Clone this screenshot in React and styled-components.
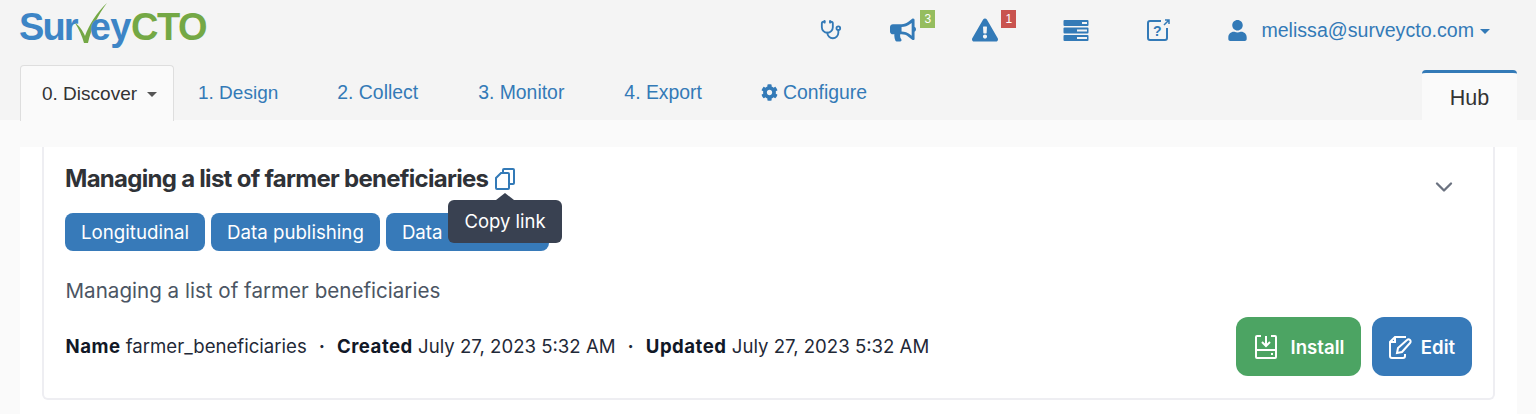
import React from 'react';
import styled, { createGlobalStyle } from 'styled-components';
import { FaBullhorn, FaExclamationTriangle, FaUser, FaCog } from 'react-icons/fa';
import { Stethoscope, ChevronDown } from 'lucide-react';

const GlobalStyle = createGlobalStyle`
  html, body {
    margin: 0;
    height: 414px;
    overflow: hidden;
    background: #fafafa;
  }
`;

const Header = styled.header`
  background: #f4f4f4;
  height: 120px;
  font-family: "Liberation Sans", Arial, sans-serif;
`;

const TopBar = styled.div`
  display: flex;
  align-items: flex-start;
  height: 65px;
  padding-left: 19px;
`;

const Logo = styled.div`
  display: flex;
  align-items: baseline;
  margin-top: 6px;
  font-size: 38px;
  line-height: 42px;
  font-weight: 700;
  letter-spacing: -1.9px;
  color: #3d85c6;
`;

const LogoCheck = styled.svg`
  width: 32px;
  height: 40px;
  margin: -4px -17px 5px -2px;
  align-self: flex-end;
`;

const LogoBlueEnd = styled.span`
  letter-spacing: -0.5px;
`;

const LogoGreen = styled.span`
  color: #74a845;
  letter-spacing: -1.4px;
`;

const Nav = styled.nav`
  display: flex;
  align-items: center;
  margin-left: auto;
  height: 60px;
  padding-right: 46px;
  color: #337ab7;
`;

const NavIcon = styled.a`
  display: flex;
  position: relative;
  margin-left: ${p => p.$gap}px;
  color: #337ab7;
`;

const Badge = styled.span`
  position: absolute;
  top: -7px;
  left: ${p => p.$left}px;
  width: 15px;
  height: 18px;
  background: ${p => p.$color};
  color: #fff;
  font-size: 12px;
  line-height: 18px;
  text-align: center;
`;

const Email = styled.a`
  margin-left: 13px;
  font-size: 19.6px;
  color: #337ab7;
`;

const Caret = styled.span`
  display: inline-block;
  width: 0;
  height: 0;
  margin-left: ${p => p.$gap || 6}px;
  border-left: 5.5px solid transparent;
  border-right: 5.5px solid transparent;
  border-top: 5px solid ${p => p.$color || 'currentColor'};
  vertical-align: 3px;
`;

const TabRow = styled.div`
  display: flex;
  align-items: flex-end;
  height: 55px;
  padding: 0 19px 0 20px;
`;

const ActiveTab = styled.div`
  box-sizing: border-box;
  width: 154px;
  height: 56px;
  margin-bottom: -1px;
  padding: 17px 0 0 21px;
  background: #fafafa;
  border: 1px solid #dedede;
  border-bottom: none;
  border-radius: 4px 4px 0 0;
  font-size: 19px;
  color: #333;
`;

const Tab = styled.a`
  display: flex;
  align-items: center;
  gap: 5px;
  height: 55px;
  margin-left: ${p => p.$gap}px;
  font-size: ${p => p.$size || 19.4}px;
  color: #337ab7;
`;

const HubTab = styled.div`
  box-sizing: border-box;
  width: 95px;
  height: 50px;
  margin-left: auto;
  padding-top: 13px;
  text-align: center;
  background: #fafafa;
  border-top: 3px solid #337ab7;
  border-radius: 4px 4px 0 0;
  font-size: 21.5px;
  color: #333;
`;

const Panel = styled.main`
  margin: 27px 19px 0 20px;
  padding: 0 22px 30px;
  height: 267px;
  box-sizing: border-box;
  background: #fff;
  font-family: Inter, "Liberation Sans", sans-serif;
`;

const Card = styled.section`
  box-sizing: border-box;
  height: 253px;
  padding: 17px 22px 0;
  border: 2px solid #eeeef2;
  border-top: none;
  border-radius: 0 0 6px 6px;
`;

const TitleRow = styled.div`
  display: flex;
  align-items: center;
  position: relative;
  height: 30px;
`;

const Title = styled.h2`
  margin: 0 0 0 -1px;
  font-size: 24px;
  line-height: 30px;
  font-weight: 700;
  letter-spacing: -0.72px;
  color: #2f3237;
`;

const CopyIcon = styled.svg`
  width: 22px;
  height: 22px;
  margin-left: 6px;
`;

const Tooltip = styled.div`
  position: absolute;
  left: 382px;
  top: 36px;
  z-index: 2;
  width: 114px;
  height: 43px;
  border-radius: 6px;
  background: #394151;
  color: #fff;
  font-size: 18.5px;
  line-height: 43px;
  text-align: center;

  &::before {
    content: '';
    position: absolute;
    left: 50%;
    top: -7px;
    margin-left: -9px;
    border-left: 9px solid transparent;
    border-right: 9px solid transparent;
    border-bottom: 7px solid #394151;
  }
`;

const Chevron = styled(ChevronDown)`
  position: absolute;
  right: 13px;
  top: 9px;
  color: #6b7280;
`;

const Tags = styled.div`
  display: flex;
  gap: 6px;
  margin-top: 19px;
  margin-left: -1px;
`;

const Tag = styled.span`
  box-sizing: border-box;
  height: 38px;
  padding: 0 16px;
  border-radius: 8px;
  background: #377ab9;
  color: #fff;
  font-size: 18.7px;
  line-height: 39px;
  white-space: nowrap;
`;

const Description = styled.p`
  margin: 26px 0 0 -0.5px;
  font-size: 20.6px;
  line-height: 28px;
  color: #4b5563;
`;

const FooterRow = styled.div`
  display: flex;
  align-items: center;
  justify-content: space-between;
  margin-top: 12px;
  margin-right: -1px;
`;

const Meta = styled.div`
  margin-left: -0.5px;
  padding-bottom: 2px;
  font-size: 18.6px;
  color: #1f2937;
  white-space: pre;

  b {
    font-weight: 700;
    letter-spacing: 0.5px;
    color: #111827;
  }
`;

const Dot = styled.span`
  margin: 0 12px;
  font-weight: 700;
`;

const Actions = styled.div`
  display: flex;
  gap: 11px;
`;

const ActionButton = styled.button`
  display: flex;
  align-items: center;
  justify-content: center;
  gap: ${p => p.$gap}px;
  width: ${p => p.$width}px;
  height: 59px;
  padding: 0 0 0 ${p => p.$shift || 0}px;
  border: none;
  border-radius: 12px;
  background: ${p => p.$color};
  color: #fff;
  font-family: inherit;
  font-size: 18.6px;
  font-weight: 600;
`;

const CheckMark = () =>
  <LogoCheck viewBox="0 0 32 40">
    <path d="M0 20 C4 22 8 28 10 33 C14 22 22 9 32 0 C23 12 16 26 13 40 L9 40 C7 33 4 26 0 20 Z" fill="#74a845" />
  </LogoCheck>;

const ServerIcon = () =>
  <svg width="26" height="21" viewBox="0 0 26 21" fill="#337ab7">
    <rect x="0.5" y="0" width="25" height="6" rx="1" />
    <rect x="0.5" y="7.5" width="25" height="6" rx="1" />
    <rect x="0.5" y="15" width="25" height="6" rx="1" />
    <rect x="19" y="2" width="5" height="2" fill="#f4f4f4" />
    <rect x="14" y="9.5" width="10" height="2" fill="#f4f4f4" />
    <rect x="14" y="17" width="10" height="2" fill="#f4f4f4" />
  </svg>;

const HelpIcon = () =>
  <svg width="23" height="22" viewBox="0 0 23 22" fill="none" stroke="#337ab7" strokeWidth="2">
    <path d="M14 2 H3 a2 2 0 0 0 -2 2 V19 a2 2 0 0 0 2 2 H18 a2 2 0 0 0 2 -2 V9" />
    <path d="M17 6 L22 1 M18 1 H22 V5" strokeWidth="1.5" />
    <text x="6" y="17" fontFamily="Liberation Sans" fontWeight="700" fontSize="14" fill="#337ab7" stroke="none">?</text>
  </svg>;

const InstallIcon = () =>
  <svg width="22" height="24" viewBox="0 0 22 24" fill="none" stroke="#fff" strokeWidth="2">
    <path d="M6 1 H2 a1 1 0 0 0 -1 1 V22 a1 1 0 0 0 1 1 H20 a1 1 0 0 0 1 -1 V2 a1 1 0 0 0 -1 -1 H16" />
    <path d="M1 15 H21" />
    <path d="M11 1 V10 M7 7 L11 11 L15 7" />
    <path d="M16 19 H18" />
  </svg>;

const EditIcon = () =>
  <svg width="23" height="24" viewBox="0 0 23 24" fill="none" stroke="#fff" strokeWidth="2">
    <path d="M17 2 H6 L1 7 V21 a2 2 0 0 0 2 2 H14 a2 2 0 0 0 2 -2 V19" />
    <path d="M6 2 V7 H1" />
    <path d="M8 18 L9 13 L18 5 a2 2 0 0 1 3 3 L13 17 Z" />
  </svg>;

const App = () =>
  <>
    <GlobalStyle />
    <Header>
      <TopBar>
        <Logo>
          Sur<CheckMark /><LogoBlueEnd>ey</LogoBlueEnd><LogoGreen>CTO</LogoGreen>
        </Logo>
        <Nav>
          <NavIcon $gap={0}><Stethoscope size={22} strokeWidth={2} /></NavIcon>
          <NavIcon $gap={48}>
            <FaBullhorn size={26} />
            <Badge $left={30} $color="#95bd5e">3</Badge>
          </NavIcon>
          <NavIcon $gap={56}>
            <FaExclamationTriangle size={26} />
            <Badge $left={29} $color="#c9534f">1</Badge>
          </NavIcon>
          <NavIcon $gap={65}><ServerIcon /></NavIcon>
          <NavIcon $gap={58}><HelpIcon /></NavIcon>
          <NavIcon $gap={57}><FaUser size={21} /></NavIcon>
          <Email>melissa@surveycto.com<Caret /></Email>
        </Nav>
      </TopBar>
      <TabRow>
        <ActiveTab>0. Discover<Caret $gap={10} $color="#555" /></ActiveTab>
        <Tab $gap={24} $size={19}>1. Design</Tab>
        <Tab $gap={59}>2. Collect</Tab>
        <Tab $gap={60}>3. Monitor</Tab>
        <Tab $gap={60}>4. Export</Tab>
        <Tab $gap={59}><FaCog size={17} />Configure</Tab>
        <HubTab>Hub</HubTab>
      </TabRow>
    </Header>
    <Panel>
      <Card>
        <TitleRow>
          <Title>Managing a list of farmer beneficiaries</Title>
          <CopyIcon viewBox="0 0 22 22" fill="none" stroke="#337ab7" strokeWidth="2">
            <path d="M9 5 V2 a1 1 0 0 1 1 -1 H19 a1 1 0 0 1 1 1 V15 a1 1 0 0 1 -1 1 H16" />
            <path d="M7 5 H14 a1 1 0 0 1 1 1 V20 a1 1 0 0 1 -1 1 H3 a1 1 0 0 1 -1 -1 V10 Z" />
          </CopyIcon>
          <Tooltip>Copy link</Tooltip>
          <Chevron size={28} strokeWidth={2} />
        </TitleRow>
        <Tags>
          <Tag>Longitudinal</Tag>
          <Tag>Data publishing</Tag>
          <Tag>Data collection</Tag>
        </Tags>
        <Description>Managing a list of farmer beneficiaries</Description>
        <FooterRow>
          <Meta>
            <b>Name</b> farmer_beneficiaries<Dot>·</Dot><b>Created</b> July 27, 2023 5:32 AM<Dot>·</Dot><b>Updated</b> July 27, 2023 5:32 AM
          </Meta>
          <Actions>
            <ActionButton $color="#4ca463" $width={125} $gap={14} $shift={2}><InstallIcon />Install</ActionButton>
            <ActionButton $color="#377ab9" $width={100} $gap={9}><EditIcon />Edit</ActionButton>
          </Actions>
        </FooterRow>
      </Card>
    </Panel>
  </>;

export default App;
